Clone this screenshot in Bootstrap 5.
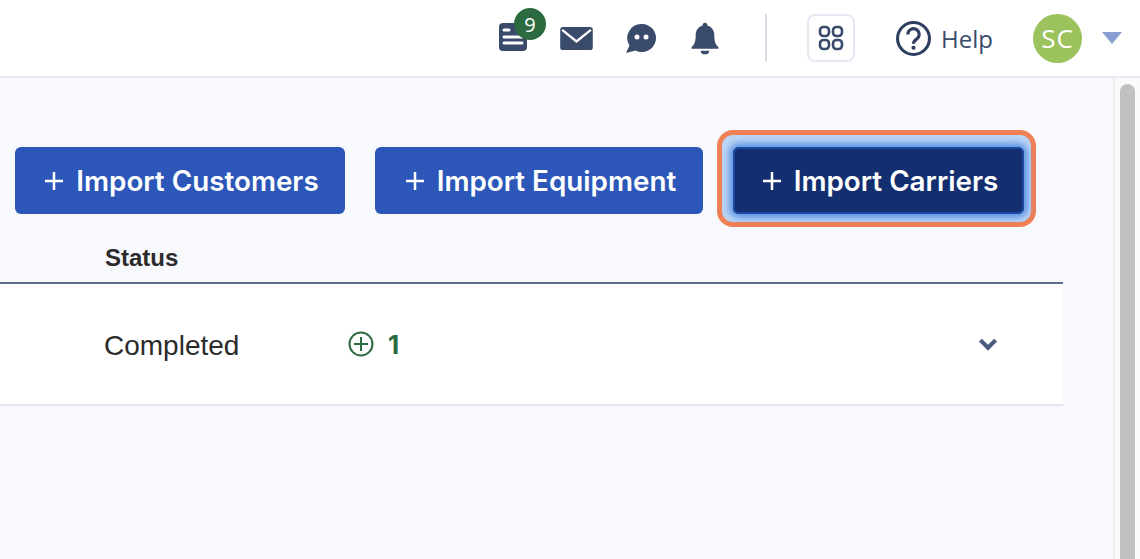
<!DOCTYPE html>
<html lang="en">

<head>
    <meta charset="UTF-8">
    <meta name="viewport" content="width=device-width, initial-scale=1.0">
    <title>Imports</title>
    <link href="https://cdn.jsdelivr.net/npm/bootstrap@5.3.2/dist/css/bootstrap.min.css" rel="stylesheet">
    <style>
        html, body { height: 100%; overflow: hidden; }
        body { background: #f8f9fd; font-family: "Liberation Sans", Arial, sans-serif; color: #2b2b2b; }
        .top-bar { height: 78px; background: #fff; border-bottom: 2px solid #e8eaf3; padding-right: 18px; }
        .top-icon { color: #3a4a6b; display: block; }
        .note-wrap { width: 30px; height: 30px; margin-right: 31px; }
        .note-count { top: -15px; left: 15px; width: 32px; height: 32px; background: #2b6b3f; color: #fff; font: 20px "Open Sans", sans-serif; }
        .mail-icon { margin-right: 32px; }
        .chat-icon { margin-right: 34px; }
        .v-rule { width: 2px; height: 48px; background: #d9dce4; margin: 0 40px 0 46px; }
        .apps-box { width: 48px; height: 48px; border: 2px solid #e6e8f3; border-radius: 8px; margin-right: 41px; }
        .help-text { font: 24px "Open Sans", sans-serif; color: #3a4a6b; margin-left: 10px; margin-right: 40px; }
        .user-dot { width: 49px; height: 49px; background: #9bc25c; color: #fff; font: 26px "Open Sans", sans-serif; letter-spacing: 1px; margin-right: 20px; }
        .user-caret { width: 0; height: 0; border-left: 10px solid transparent; border-right: 10px solid transparent; border-top: 12px solid #8a9fd1; }
        .page-body { height: 481px; }
        .page-main { width: 1063px; padding-top: 69px; }
        .imp-btn { position: relative; height: 67px; background: #2c57b8; border: 0; border-radius: 6px; color: #fff; font: 600 27.8px Inter, sans-serif; padding: 0 0 0 3px; }
        .imp-btn svg { margin-right: 12px; }
        .imp-btn-a { width: 330px; }
        .imp-btn-b { width: 328px; }
        .imp-btn-c { width: 291px; background: #132f70; box-shadow: inset 0 0 0 2px #1d48a0, 0 0 6px 4px #5f97e4; }
        .imp-btn-c::after { content: ""; position: absolute; inset: -17px -12px -13px -16px; z-index: -1; background: #bcd4f4; border: 5px solid #f08055; border-radius: 16px; }
        .btn-row { padding-left: 15px; gap: 30px; }
        .head-row { height: 70px; padding: 21px 0 0 105px; border-bottom: 2px solid #5d6b8c; font-size: 24px; font-weight: 700; line-height: 45px; }
        .data-row { height: 122px; background: #fff; border-bottom: 2px solid #e2e6f0; padding-left: 104px; padding-right: 65px; font-size: 28px; }
        .state-cell { width: 244px; padding-top: 3px; }
        .added-num { color: #2b6b3f; font: 700 26px Inter, sans-serif; margin-left: 14px; }
        .scroll-track { width: 27px; background: #fafafa; border-left: 2px solid #ececec; padding: 6px 5px 0; }
        .scroll-thumb { height: 100%; background: #c1c1c1; border-radius: 8px 8px 0 0; }
    </style>
</head>

<body>
    <!-- Barre du haut -->
    <header class="top-bar d-flex align-items-center justify-content-end">
        <div class="note-wrap position-relative">
            <svg class="top-icon" width="28" height="28" viewBox="0 0 28 28"><rect width="28" height="28" rx="4" fill="#3a4a6b" /><path d="M5 7h5M5 14h18M5 20h18" stroke="#fff" stroke-width="3" stroke-linecap="round" /></svg>
            <span class="note-count position-absolute rounded-circle d-flex align-items-center justify-content-center">9</span>
        </div>
        <svg class="top-icon mail-icon" width="33" height="23" viewBox="0 0 34 24"><rect width="34" height="24" rx="3" fill="#3a4a6b" /><path d="M2 3l15 12L32 3" fill="none" stroke="#fff" stroke-width="2.5" /></svg>
        <svg class="top-icon chat-icon" width="32" height="32" viewBox="0 0 32 32"><path d="M17 2a14 14 0 1 1-6.500 26.400L1 31l3.500-7.500A14 14 0 0 1 17 2z" fill="#3a4a6b" /><circle cx="12" cy="15" r="2.500" fill="#fff" /><circle cx="21" cy="15" r="2.500" fill="#fff" /></svg>
        <svg class="top-icon" width="28" height="33" viewBox="0 0 30 34"><path d="M15 0a2.500 2.500 0 0 1 2.500 3C23 4.500 25 9 25 14c0 6 1 9 4.500 12.500v1.500H.5v-1.500C4 23 5 20 5 14 5 9 7 4.500 12.500 3A2.500 2.500 0 0 1 15 0zM10.500 30h9a4.500 4 0 0 1-9 0z" fill="#3a4a6b" /></svg>
        <div class="v-rule"></div>
        <div class="apps-box d-flex align-items-center justify-content-center">
            <svg width="26" height="26" viewBox="0 0 26 26" fill="none" stroke="#3a4a6b" stroke-width="2.600"><rect x="2" y="2" width="9" height="9" rx="3.500" /><rect x="15" y="2" width="9" height="9" rx="3.500" /><rect x="2" y="15" width="9" height="9" rx="3.500" /><rect x="15" y="15" width="9" height="9" rx="3.500" /></svg>
        </div>
        <svg width="35" height="35" viewBox="0 0 34 34"><circle cx="17" cy="17" r="15.500" fill="none" stroke="#2f3f5f" stroke-width="3" /><path d="M11.500 13a5.500 5.500 0 1 1 8.500 4.600c-2 1.400-3 2.300-3 4.400" fill="none" stroke="#2f3f5f" stroke-width="3" /><circle cx="17" cy="26" r="2" fill="#2f3f5f" /></svg>
        <span class="help-text">Help</span>
        <div class="user-dot rounded-circle d-flex align-items-center justify-content-center">SC</div>
        <div class="user-caret"></div>
    </header>

    <div class="page-body d-flex justify-content-between">
        <main class="page-main">
            <div class="btn-row d-flex">
                <button class="imp-btn imp-btn-a d-flex align-items-center justify-content-center"><svg width="20" height="20" viewBox="0 0 20 20"><path d="M10 1v18M1 10h18" stroke="#fff" stroke-width="2.500" /></svg>Import Customers</button>
                <button class="imp-btn imp-btn-b d-flex align-items-center justify-content-center"><svg width="20" height="20" viewBox="0 0 20 20"><path d="M10 1v18M1 10h18" stroke="#fff" stroke-width="2.500" /></svg>Import Equipment</button>
                <button class="imp-btn imp-btn-c d-flex align-items-center justify-content-center"><svg width="20" height="20" viewBox="0 0 20 20"><path d="M10 1v18M1 10h18" stroke="#fff" stroke-width="2.500" /></svg>Import Carriers</button>
            </div>
            <div class="head-row">Status</div>
            <div class="data-row d-flex align-items-center">
                <div class="state-cell">Completed</div>
                <svg width="26" height="26" viewBox="0 0 26 26" fill="none" stroke="#2b6b3f" stroke-width="2"><circle cx="13" cy="13" r="11.500" /><path d="M13 6v14M6 13h14" /></svg>
                <span class="added-num flex-grow-1">1</span>
                <svg width="20" height="13" viewBox="0 0 18 12"><path d="M2 2l7 7 7-7" fill="none" stroke="#4a5a80" stroke-width="3.800" /></svg>
            </div>
        </main>
        <div class="scroll-track"><div class="scroll-thumb"></div></div>
    </div>
    <script src="https://cdn.jsdelivr.net/npm/bootstrap@5.3.2/dist/js/bootstrap.bundle.min.js"></script>
</body>

</html>
